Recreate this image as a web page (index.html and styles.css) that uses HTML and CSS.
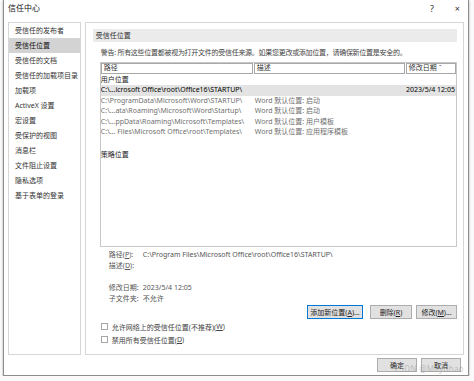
FILE: index.html
```html
<!DOCTYPE html>
<html lang="zh-CN">
<head>
    <meta charset="UTF-8">
    <title>信任中心</title>
    <link rel="stylesheet" href="styles.css">
</head>
<body>
    <div class="window">
        <div class="titlebar">
            <span class="title">信任中心</span>
            <span class="controls"><span class="help">?</span><span class="close">×</span></span>
        </div>
        <div class="body">
            <ul class="nav">
                <li>受信任的发布者</li>
                <li class="active">受信任位置</li>
                <li>受信任的文档</li>
                <li>受信任的加载项目录</li>
                <li>加载项</li>
                <li>ActiveX 设置</li>
                <li>宏设置</li>
                <li>受保护的视图</li>
                <li>消息栏</li>
                <li>文件阻止设置</li>
                <li>隐私选项</li>
                <li>基于表单的登录</li>
            </ul>
            <div class="main">
                <div class="section-head">受信任位置</div>
                <div class="main-inner">
                    <p class="warn">警告: 所有这些位置都被视为打开文件的受信任来源。如果您更改或添加位置，请确保新位置是安全的。</p>
                    <div class="table">
                        <div class="thead">
                            <div class="th">路径</div>
                            <div class="th">描述</div>
                            <div class="th">修改日期 ˇ</div>
                        </div>
                        <div class="group">用户位置</div>
                        <div class="row selected">
                            <span>C:\...icrosoft Office\root\Office16\STARTUP\</span>
                            <span></span>
                            <span class="date">2023/5/4 12:05</span>
                        </div>
                        <div class="row">
                            <span>C:\ProgramData\Microsoft\Word\STARTUP\</span>
                            <span>Word 默认位置: 启动</span>
                            <span></span>
                        </div>
                        <div class="row">
                            <span>C:\...ata\Roaming\Microsoft\Word\Startup\</span>
                            <span>Word 默认位置: 启动</span>
                            <span></span>
                        </div>
                        <div class="row">
                            <span>C:\...ppData\Roaming\Microsoft\Templates\</span>
                            <span>Word 默认位置: 用户模板</span>
                            <span></span>
                        </div>
                        <div class="row">
                            <span>C:\... Files\Microsoft Office\root\Templates\</span>
                            <span>Word 默认位置: 应用程序模板</span>
                            <span></span>
                        </div>
                        <div class="row"></div>
                        <div class="group">策略位置</div>
                    </div>
                    <div class="details">
                        <div class="detail"><span class="label">路径(<u>P</u>):</span><span>C:\Program Files\Microsoft Office\root\Office16\STARTUP\</span></div>
                        <div class="detail"><span class="label">描述(<u>D</u>):</span><span></span></div>
                        <div class="detail"></div>
                        <div class="detail"><span class="label">修改日期:</span><span>2023/5/4 12:05</span></div>
                        <div class="detail"><span class="label">子文件夹:</span><span>不允许</span></div>
                    </div>
                    <div class="actions">
                        <button class="btn btn-add default">添加新位置(<u>A</u>)...</button>
                        <button class="btn btn-del">删除(<u>R</u>)</button>
                        <button class="btn btn-edit">修改(<u>M</u>)...</button>
                    </div>
                    <label class="check"><span class="box"></span>允许网络上的受信任位置(不推荐)(<u>W</u>)</label>
                    <label class="check"><span class="box"></span>禁用所有受信任位置(<u>D</u>)</label>
                </div>
            </div>
        </div>
        <div class="footer">
            <button class="btn btn-ok">确定</button>
            <button class="btn btn-cancel">取消</button>
        </div>
        <div class="watermark">CSDN @Moyuhao</div>
    </div>
</body>
</html>
```

FILE: styles.css
```css
* {
    box-sizing: border-box;
}
body {
    margin: 0;
    background: #fafafa;
    font-family: "Noto Sans", "Noto Sans CJK SC", sans-serif;
    font-size: 7px;
    color: #222;
}
.window {
    position: relative;
    margin-left: 3px;
    width: 466px;
    height: 376px;
    background: #fff;
    border: 1px solid #8c8c8c;
    border-top: none;
    box-shadow: 0 1px 2px rgba(0, 0, 0, 0.35);
}
.titlebar {
    height: 22px;
    display: flex;
    justify-content: space-between;
    padding: 3px 0 0 4px;
}
.title {
    font-size: 8px;
    line-height: 10px;
    color: #111;
}
.controls {
    display: flex;
    gap: 21px;
    padding-right: 8px;
    font-size: 9px;
    line-height: 12px;
    color: #333;
}
.body {
    display: flex;
    gap: 4px;
    padding: 0 4px;
    height: 333px;
}
.nav {
    list-style: none;
    margin: 0;
    padding: 0;
    width: 73px;
    border: 1px solid #d6d6d6;
}
.nav li {
    height: 15px;
    line-height: 15px;
    padding-left: 6px;
    color: #333;
    white-space: nowrap;
}
.nav li.active {
    background: #d3d3d3;
    color: #111;
}
.main {
    width: 380px;
    border: 1px solid #d6d6d6;
}
.section-head {
    margin: 6px 6px 0 7px;
    height: 13px;
    line-height: 13px;
    padding-left: 3px;
    background: #ebebeb;
    color: #333;
}
.main-inner {
    padding: 0 6px 0 14px;
}
.warn {
    margin: 6px 0 0 1px;
    line-height: 10px;
    color: #444;
    letter-spacing: -0.28px;
    white-space: nowrap;
}
.table {
    margin-top: 4px;
    height: 185px;
    border: 1px solid #c8c8c8;
}
.thead {
    display: grid;
    grid-template-columns: 152px 151px 1fr;
    column-gap: 1px;
    height: 10.5px;
}
.th {
    border: 1px solid #a8a8a8;
    line-height: 8.5px;
    padding-left: 2px;
    color: #333;
}
.group {
    margin-top: 1px;
    height: 10.6px;
    line-height: 10.6px;
    color: #222;
}
.row {
    display: grid;
    grid-template-columns: 152px 151px 1fr;
    column-gap: 1px;
    height: 10.6px;
    line-height: 10.6px;
    color: #707070;
    white-space: nowrap;
}
.row span:nth-child(2) {
    padding-left: 1px;
}
.row.selected {
    background: #e3e3e3;
    color: #000;
}
.date {
    text-align: right;
    padding-right: 1px;
}
.details {
    margin-top: 2px;
}
.detail {
    display: flex;
    height: 11px;
    line-height: 11px;
    color: #555;
    padding-left: 9px;
    white-space: nowrap;
}
.label {
    width: 34px;
}
.actions {
    display: flex;
    justify-content: flex-end;
    margin-top: 1px;
}
.btn {
    height: 14px;
    padding: 0;
    font-family: "Noto Sans", "Noto Sans CJK SC", sans-serif;
    font-size: 7px;
    color: #222;
    background: #e1e1e1;
    border: 1px solid #adadad;
}
.btn.default {
    border-color: #0078d7;
}
.btn-add {
    width: 56px;
}
.btn-del {
    width: 42px;
    margin-left: 7px;
}
.btn-edit {
    width: 41px;
    margin-left: 4px;
}
.check {
    display: flex;
    align-items: center;
    height: 13px;
    padding-left: 1px;
    color: #444;
}
.check:first-of-type {
    margin-top: 1px;
}
.box {
    width: 7px;
    height: 7px;
    border: 1px solid #a6a6a6;
    background: #fff;
    margin-right: 4px;
}
.footer {
    display: flex;
    justify-content: flex-end;
    gap: 4px;
    padding: 3px 7px 0 0;
}
.btn-ok,
.btn-cancel {
    width: 40px;
}
.watermark {
    position: absolute;
    right: 4px;
    bottom: 1px;
    font-size: 8px;
    color: rgba(150, 150, 150, 0.5);
    letter-spacing: 0.3px;
}
```
